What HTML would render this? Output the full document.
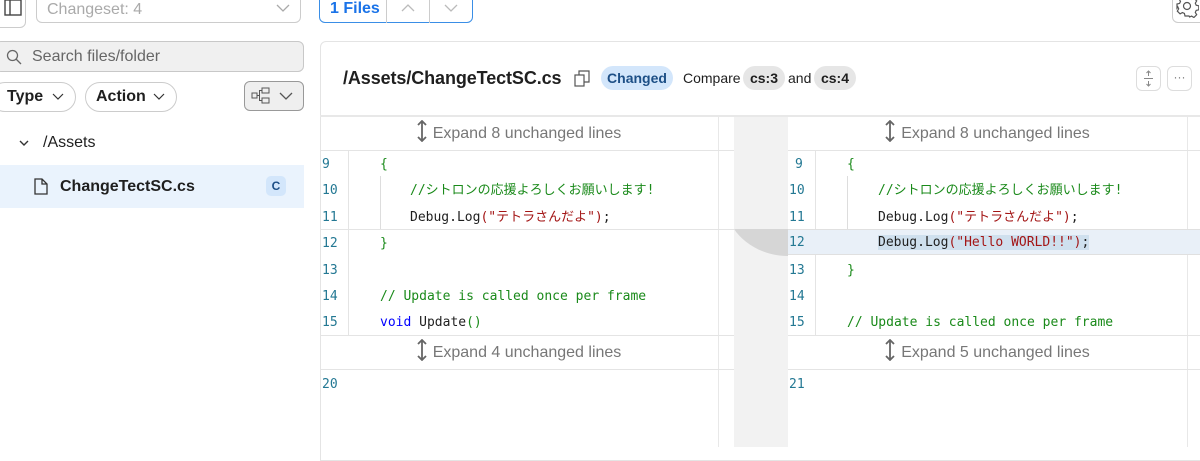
<!DOCTYPE html>
<html><head><meta charset="utf-8"><style>
*{box-sizing:border-box;margin:0;padding:0}
body{width:1200px;height:447px;overflow:hidden;background:#fff;font-family:"Liberation Sans","Noto Sans CJK JP",sans-serif;position:relative;color:#1f1f1f}
.a{position:absolute}
.mono{font-family:"DejaVu Sans Mono","Noto Sans CJK JP",monospace;font-size:13px;white-space:pre}
.ln{position:absolute;font-family:"DejaVu Sans Mono",monospace;font-size:13px;color:#237893;height:26px;line-height:26px}
.code{position:absolute;height:26px;line-height:26px}
.g{color:#1a8a1a}.r{color:#a31515}.b{color:#0000ff}
.exp{position:absolute;height:34px;line-height:34px;font-size:16px;color:#777;text-align:center}
.exp svg{vertical-align:-4px;margin-right:6px}
</style></head><body>
<!-- top bar -->
<div class="a" style="left:-10px;top:-10px;width:36px;height:38px;border:1px solid #ccc;border-radius:6px"></div>
<svg class="a" style="left:4px;top:0" width="18" height="16"><rect x="1" y="0" width="16" height="15" fill="none" stroke="#444" stroke-width="1.4"/><line x1="6" y1="0" x2="6" y2="15" stroke="#444" stroke-width="1.4"/></svg>
<div class="a" style="left:36px;top:-10px;width:265px;height:33px;border:1px solid #ccc;border-radius:6px;color:#aaa;font-size:16px;padding:10px 0 0 10px">Changeset: 4</div>
<svg class="a" style="left:276px;top:4px" width="14" height="8"><path d="M1 1L7 7L13 1" fill="none" stroke="#aaa" stroke-width="1.3"/></svg>
<div class="a" style="left:319px;top:-10px;width:154px;height:33px;border:1px solid #3a8ee6;border-radius:6px"></div>
<div class="a" style="left:330px;top:0;font-size:16px;color:#1a73e8;font-weight:bold">1 Files</div>
<div class="a" style="left:386px;top:-10px;width:1px;height:33px;background:#ccc"></div>
<div class="a" style="left:429px;top:-10px;width:1px;height:33px;background:#ccc"></div>
<svg class="a" style="left:401px;top:4px" width="14" height="8"><path d="M1 7L7 1L13 7" fill="none" stroke="#bbb" stroke-width="1.3"/></svg>
<svg class="a" style="left:444px;top:4px" width="14" height="8"><path d="M1 1L7 7L13 1" fill="none" stroke="#bbb" stroke-width="1.3"/></svg>
<div class="a" style="left:1172px;top:-10px;width:40px;height:33px;border:1px solid #ccc;border-radius:6px"></div>
<svg class="a" style="left:1175px;top:-6px" width="24" height="24" viewBox="0 0 24 24"><path d="M10 2h4l.6 2.6 2 .9 2.3-1.4 2.8 2.8-1.4 2.3.9 2 2.6.6v4l-2.6.6-.9 2 1.4 2.3-2.8 2.8-2.3-1.4-2 .9L14 22h-4l-.6-2.6-2-.9-2.3 1.4-2.8-2.8 1.4-2.3-.9-2L2 14v-4l2.6-.6.9-2-1.4-2.3 2.8-2.8 2.3 1.4 2-.9Z" fill="none" stroke="#555" stroke-width="1.2"/><circle cx="12" cy="12" r="3.5" fill="none" stroke="#555" stroke-width="1.2"/></svg>
<!-- left pane -->
<div class="a" style="left:-5px;top:41px;width:309px;height:31px;border:1px solid #c8c8c8;border-radius:6px;background:#f0f0f0"></div>
<svg class="a" style="left:6px;top:49px" width="16" height="16"><circle cx="6.5" cy="6.5" r="5" fill="none" stroke="#666" stroke-width="1.3"/><line x1="10" y1="10" x2="15" y2="15" stroke="#666" stroke-width="1.3"/></svg>
<div class="a" style="left:32px;top:48px;font-size:16px;color:#666">Search files/folder</div>
<div class="a" style="left:-10px;top:82px;width:86px;height:30px;border:1px solid #ccc;border-radius:15px"></div>
<div class="a" style="left:7px;top:88px;font-size:16px;font-weight:bold">Type</div>
<svg class="a" style="left:52px;top:93px" width="12" height="7"><path d="M1 1L6 6L11 1" fill="none" stroke="#333" stroke-width="1.2"/></svg>
<div class="a" style="left:85px;top:82px;width:92px;height:30px;border:1px solid #ccc;border-radius:15px"></div>
<div class="a" style="left:96px;top:88px;font-size:16px;font-weight:bold">Action</div>
<svg class="a" style="left:153px;top:93px" width="12" height="7"><path d="M1 1L6 6L11 1" fill="none" stroke="#333" stroke-width="1.2"/></svg>
<div class="a" style="left:244px;top:81px;width:60px;height:30px;border:1px solid #999;border-radius:6px;background:#efefef"></div>
<svg class="a" style="left:251px;top:86px" width="20" height="20"><rect x="1" y="7" width="5" height="5" fill="none" stroke="#555"/><rect x="11" y="2" width="7" height="5" fill="none" stroke="#555"/><rect x="11" y="12" width="7" height="5" fill="none" stroke="#555"/><path d="M6 9.5H8.5V4.5H11M8.5 9.5V14.5H11" fill="none" stroke="#555"/></svg>
<svg class="a" style="left:279px;top:92px" width="14" height="8"><path d="M1 1L7 7L13 1" fill="none" stroke="#555" stroke-width="1.3"/></svg>
<svg class="a" style="left:19px;top:140px" width="10" height="6"><path d="M1 1L5 5L9 1" fill="none" stroke="#333" stroke-width="1.4"/></svg>
<div class="a" style="left:43px;top:134px;font-size:16px">/Assets</div>
<div class="a" style="left:0;top:165px;width:304px;height:43px;background:#eaf3fd"></div>
<svg class="a" style="left:34px;top:178px" width="14" height="17"><path d="M1 1H8L13 6V16H1Z M8 1V6H13" fill="none" stroke="#333" stroke-width="1.3"/></svg>
<div class="a" style="left:60px;top:178px;font-size:16px;font-weight:bold">ChangeTectSC.cs</div>
<div class="a" style="left:266px;top:176px;width:20px;height:20px;border-radius:5px;background:#d3e6fb;color:#1d4f86;font-size:12px;font-weight:bold;text-align:center;line-height:20px">C</div>
<!-- right panel -->
<div class="a" style="left:320px;top:41px;width:890px;height:420px;border:1px solid #e4e4e4;border-radius:6px 0 0 0"></div>
<div class="a" style="left:343px;top:68px;font-size:18px;font-weight:bold;letter-spacing:-0.1px">/Assets/ChangeTectSC.cs</div>
<svg class="a" style="left:574px;top:70px" width="16" height="17"><rect x="1" y="5" width="9" height="11" fill="none" stroke="#555" stroke-width="1.2"/><path d="M5 5V1H15V12H10" fill="none" stroke="#555" stroke-width="1.2"/></svg>
<div class="a" style="left:601px;top:66px;width:72px;height:24px;border-radius:12px;background:#d3e6fb;color:#1d4f86;font-size:14px;font-weight:bold;text-align:center;line-height:24px">Changed</div>
<div class="a" style="left:683px;top:70px;font-size:14px">Compare</div>
<div class="a" style="left:743px;top:66px;width:42px;height:24px;border-radius:12px;background:#e6e6e6;font-size:14px;font-weight:bold;text-align:center;line-height:24px">cs:3</div>
<div class="a" style="left:788px;top:70px;font-size:14px">and</div>
<div class="a" style="left:814px;top:66px;width:42px;height:24px;border-radius:12px;background:#e6e6e6;font-size:14px;font-weight:bold;text-align:center;line-height:24px">cs:4</div>
<div class="a" style="left:1136px;top:66px;width:25px;height:25px;border:1px solid #ddd;border-radius:6px"></div>
<svg class="a" style="left:1142px;top:70px" width="13" height="17"><path d="M6.5 1V6M4.5 3L6.5 1L8.5 3M2 8.5H11M6.5 11V16M4.5 14L6.5 16L8.5 14" fill="none" stroke="#888" stroke-width="1"/></svg>
<div class="a" style="left:1167px;top:66px;width:25px;height:25px;border:1px solid #ddd;border-radius:6px;color:#777;font-size:12px;text-align:center;line-height:20px">···</div>
<div class="a" style="left:320px;top:115px;width:880px;height:2px;background:#e8e8e8"></div>
<!-- gutter -->
<div class="a" style="left:734px;top:117px;width:54px;height:330px;background:#f2f2f2"></div>
<svg class="a" style="left:734px;top:229px" width="54" height="27"><path d="M0 0H54V27C30 27 10 15 0 0Z" fill="#d6d6d6"/></svg>
<div class="a" style="left:718px;top:117px;width:1px;height:330px;background:#e8e8e8"></div>
<div class="a" style="left:1187px;top:117px;width:1px;height:330px;background:#e8e8e8"></div>
<div class="exp" style="left:320px;top:117px;width:398px"><svg width="10" height="22"><path d="M5 1V21M1 5L5 1L9 5M1 17L5 21L9 17" fill="none" stroke="#666" stroke-width="1.8"/></svg>Expand 8 unchanged lines</div>
<div class="exp" style="left:788px;top:117px;width:399px"><svg width="10" height="22"><path d="M5 1V21M1 5L5 1L9 5M1 17L5 21L9 17" fill="none" stroke="#666" stroke-width="1.8"/></svg>Expand 8 unchanged lines</div>
<div class="a" style="left:320px;top:150px;width:414px;height:1px;background:#e4e4e4"></div>
<div class="a" style="left:788px;top:150px;width:412px;height:1px;background:#e4e4e4"></div>
<div class="a" style="left:348px;top:151px;width:1px;height:184px;background:#e4e4e4"></div>
<div class="a" style="left:815px;top:151px;width:1px;height:184px;background:#e4e4e4"></div>
<div class="a" style="left:380px;top:176px;width:1px;height:53px;background:#ddd"></div>
<div class="a" style="left:847px;top:176px;width:1px;height:79px;background:#ddd"></div>
<div class="a" style="left:320px;top:229px;width:414px;height:1px;background:#e4e4e4"></div>
<div class="a" style="left:788px;top:229px;width:412px;height:26px;background:#e9f0f8;border-top:1px solid #e0e0e0;border-bottom:1px solid #e0e0e0"></div>
<!-- left lines -->
<div class="ln" style="left:322px;top:152px">9</div><div class="code mono g" style="left:380px;top:152px">{</div>
<div class="ln" style="left:322px;top:178px">10</div><div class="code mono g" style="left:410px;top:178px">//シトロンの応援よろしくお願いします!</div>
<div class="ln" style="left:322px;top:205px">11</div><div class="code mono" style="left:410px;top:205px">Debug.Log<span class="r">("テトラさんだよ")</span>;</div>
<div class="ln" style="left:322px;top:231px">12</div><div class="code mono g" style="left:380px;top:231px">}</div>
<div class="ln" style="left:322px;top:258px">13</div>
<div class="ln" style="left:322px;top:284px">14</div><div class="code mono g" style="left:380px;top:284px">// Update is called once per frame</div>
<div class="ln" style="left:322px;top:310px">15</div><div class="code mono" style="left:380px;top:310px"><span class="b">void</span> Update<span class="g">()</span></div>
<!-- right lines -->
<div class="ln" style="left:795px;top:152px">9</div><div class="code mono g" style="left:847px;top:152px">{</div>
<div class="ln" style="left:789px;top:178px">10</div><div class="code mono g" style="left:878px;top:178px">//シトロンの応援よろしくお願いします!</div>
<div class="ln" style="left:789px;top:205px">11</div><div class="code mono" style="left:878px;top:205px">Debug.Log<span class="r">("テトラさんだよ")</span>;</div>
<div class="ln" style="left:789px;top:230px">12</div><div class="code mono" style="left:878px;top:230px"><span style="background:#cfe0ee">Debug.Log<span class="r">("Hello WORLD!!")</span>;</span></div>
<div class="ln" style="left:789px;top:258px">13</div><div class="code mono g" style="left:847px;top:258px">}</div>
<div class="ln" style="left:789px;top:284px">14</div>
<div class="ln" style="left:789px;top:310px">15</div><div class="code mono g" style="left:847px;top:310px">// Update is called once per frame</div>
<div class="a" style="left:320px;top:335px;width:414px;height:1px;background:#e4e4e4"></div>
<div class="a" style="left:788px;top:335px;width:412px;height:1px;background:#e4e4e4"></div>
<div class="exp" style="left:320px;top:336px;width:398px"><svg width="10" height="22"><path d="M5 1V21M1 5L5 1L9 5M1 17L5 21L9 17" fill="none" stroke="#666" stroke-width="1.8"/></svg>Expand 4 unchanged lines</div>
<div class="exp" style="left:788px;top:336px;width:399px"><svg width="10" height="22"><path d="M5 1V21M1 5L5 1L9 5M1 17L5 21L9 17" fill="none" stroke="#666" stroke-width="1.8"/></svg>Expand 5 unchanged lines</div>
<div class="a" style="left:320px;top:369px;width:414px;height:1px;background:#e4e4e4"></div>
<div class="a" style="left:788px;top:369px;width:412px;height:1px;background:#e4e4e4"></div>
<div class="ln" style="left:322px;top:372px">20</div>
<div class="ln" style="left:789px;top:372px">21</div>
</body></html>
